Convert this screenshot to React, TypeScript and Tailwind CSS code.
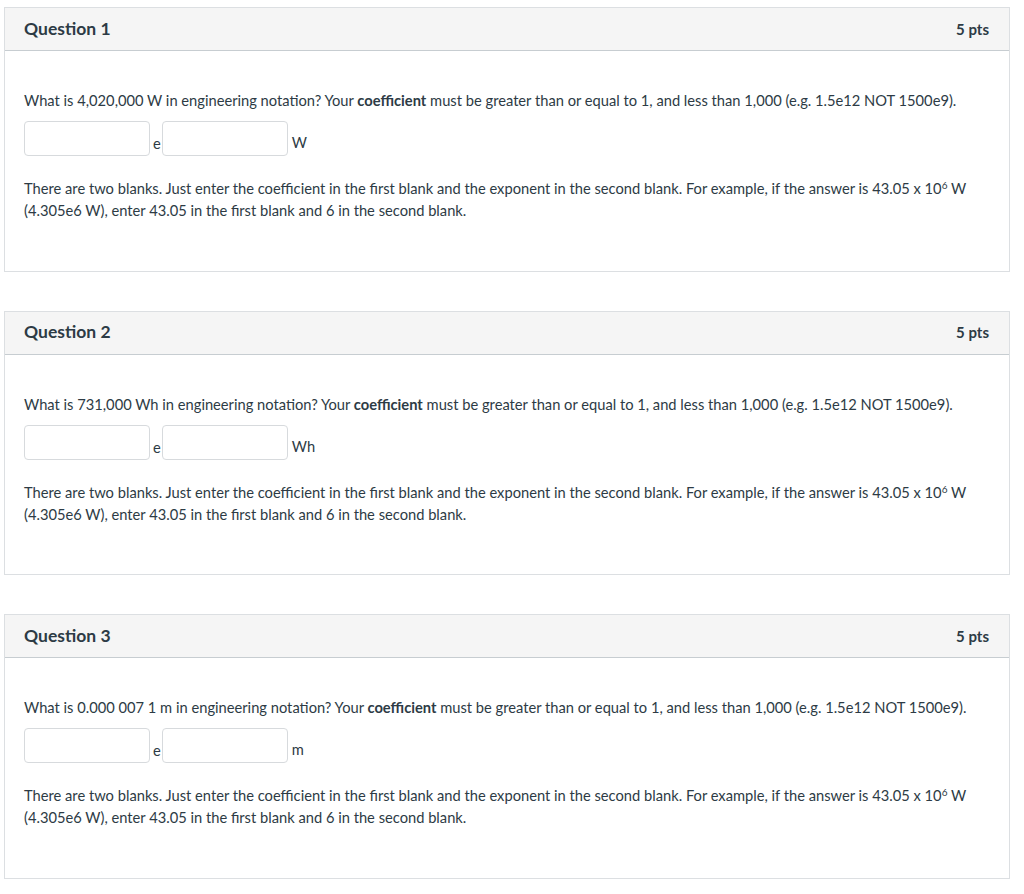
const questions = [
  { n: 1, value: "4,020,000 W", unit: "W" },
  { n: 2, value: "731,000 Wh", unit: "Wh" },
  { n: 3, value: "0.000 007 1 m", unit: "m" },
]

function Blank() {
  return (
    <input
      type="text"
      className="w-[126px] h-[35px] rounded-[4px] border border-[#d7dadd] bg-white px-2 text-[14px] outline-none"
    />
  )
}

function QuestionCard({ n, value, unit }: { n: number; value: string; unit: string }) {
  return (
    <div className="w-[1006px] border border-[#dcdfe2] bg-white">
      {/* Header */}
      <div className="flex h-[43px] items-center justify-between border-b border-[#c7cdd1] bg-[#f5f5f5] pl-[19px] pr-5">
        <span className="text-[17.5px] font-bold text-[#2d3b45]">Question {n}</span>
        <span className="text-[15px] font-bold text-[#2d3b45]">5 pts</span>
      </div>

      {/* Body */}
      <div className="pl-[19px] pr-5 pt-[38px] pb-[49.5px] text-[14.7px] leading-[22px] text-[#2d3b45]">
        <p>
          What is {value} in engineering notation? Your <strong className="font-bold">coefficient</strong> must
          be greater than or equal to 1, and less than 1,000 (e.g. 1.5e12 NOT 1500e9).
        </p>

        <div className="mt-[10px] flex items-end">
          <Blank />
          <span className="ml-[3px] mr-[1px] mb-[5px] leading-none">e</span>
          <Blank />
          <span className="ml-[4px] mb-[6px] leading-none">{unit}</span>
        </div>

        <p className="mt-[21px]">
          There are two blanks. Just enter the coefficient in the first blank and the exponent in the second
          blank. For example, if the answer is 43.05 x 10
          <span className="relative -top-[5px] text-[10px] leading-none">6</span> W (4.305e6 W), enter 43.05 in
          the first blank and 6 in the second blank.
        </p>
      </div>
    </div>
  )
}

export default function App() {
  return (
    <div className="min-h-screen bg-white pt-[7px] pl-[4px] font-['Lato',sans-serif]">
      <div className="flex flex-col gap-[39px]">
        {questions.map((q) => (
          <QuestionCard key={q.n} {...q} />
        ))}
      </div>
    </div>
  )
}
